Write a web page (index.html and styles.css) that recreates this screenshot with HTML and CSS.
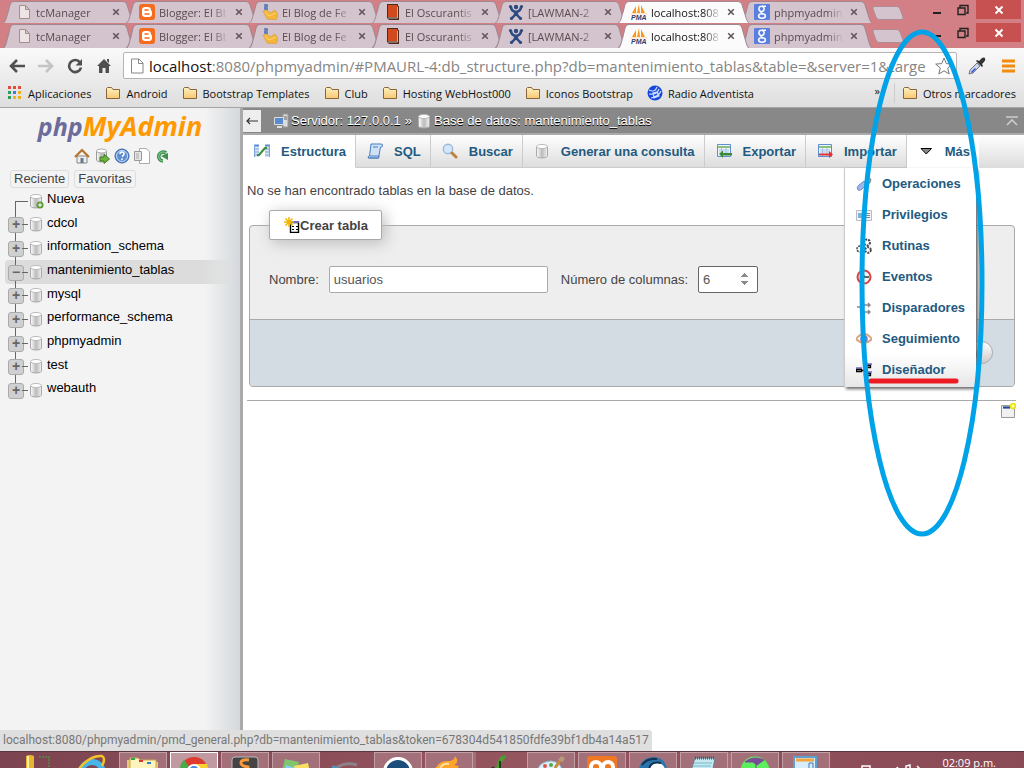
FILE: index.html
```html
<!DOCTYPE html>
<html lang="es">
<head>
  <meta charset="UTF-8">
  <title>localhost:8080 / phpMyAdmin</title>
  <link rel="stylesheet" href="styles.css">
</head>
<body>
  <!-- icons -->
  <svg class="sprite" width="0" height="0">
    <defs>
      <linearGradient id="gFolder" x1="0" y1="0" x2="0" y2="1"><stop offset="0" stop-color="#fff0c0"/><stop offset="1" stop-color="#f7c873"/></linearGradient>
      <linearGradient id="gDb"><stop offset="0" stop-color="#fff"/><stop offset="0.5" stop-color="#bbb"/><stop offset="1" stop-color="#f2f2f2"/></linearGradient>
    </defs>
    <symbol id="tab" viewBox="0 0 131 23" preserveAspectRatio="none">
      <path d="M0 23 C3 22 3 18 5 12 L7 4 Q8 .5 11 .5 H120 Q123 .5 124 4 L127 14 Q129 22 131 23" stroke="#a0868f"/>
    </symbol>
    <symbol id="page" viewBox="0 0 16 16"><path d="M3.500 1.500h6l4 4v9h-10z M9.500 1.500v4h4" fill="#eee4e4" stroke="#a09090"/></symbol>
    <symbol id="blogger" viewBox="0 0 16 16"><rect width="16" height="16" rx="3" fill="#f76b1c"/><path d="M6 3h3c2 0 3 1.500 3 3 0 1 1 .7 1 2v2c0 2-1 3-3 3H6c-2 0-3-1-3-3V6c0-2 1-3 3-3z" fill="#fff"/><path d="M6 6h3M6 10h4" stroke="#f76b1c" stroke-width="1.500" stroke-linecap="round"/></symbol>
    <symbol id="note" viewBox="0 0 16 16"><path d="M1 7l4-1 3 3 5-3 3 5-2 5-9-1z" fill="#f3b53a" stroke="#d9952a" stroke-width=".5"/><path d="M3 8l4 4 7-3" fill="none" stroke="#ffd76a"/><path d="M2 1h3v2H3v2h3" fill="none" stroke="#4a6fb5" stroke-width="1.500"/></symbol>
    <symbol id="book" viewBox="0 0 16 16"><path d="M2 0h11v2h1v14H4l-2-2z" fill="#4c2a1e"/><path d="M3 1h9v12H3z" fill="#d1491d"/><path d="M3 14h9.500V2.500" fill="none" stroke="#e8d6c8" stroke-width=".8"/></symbol>
    <symbol id="joomla" viewBox="0 0 16 16"><path d="M3 3q0 4 5 5 5-1 5-5M8 8q-1 4-4 6M8 8q1 4 4 6" fill="none" stroke="#2c4a80" stroke-width="2.600"/><g fill="#2c4a80"><circle cx="8" cy="3" r="2.200"/><circle cx="2.500" cy="2.500" r="1.600"/><circle cx="13.500" cy="2.500" r="1.600"/><circle cx="3.500" cy="14.400" r="1.600"/><circle cx="12.500" cy="14.400" r="1.600"/></g></symbol>
    <symbol id="pma" viewBox="0 0 16 16"><path d="M1 9L5 2v7zM6 9l2-9 1 9zM10 9V1l4 8z" fill="#f8981d"/><path d="M0 9.800h16" stroke="#ffcf8a" stroke-width=".7"/><text x="0" y="16" font-family="Liberation Sans, sans-serif" font-size="7" font-weight="bold" font-style="italic" fill="#333a6b">PMA</text></symbol>
    <symbol id="google" viewBox="0 0 16 16"><rect width="16" height="16" rx="1" fill="#5b7fe0"/><g fill="none" stroke="#fff" stroke-width="1.500"><circle cx="7.500" cy="4.800" r="2.600"/><path d="M8 2.200h4M9 7.300q-4 1.200 0 2.700"/><ellipse cx="8" cy="12" rx="3.400" ry="2.200"/></g></symbol>
    <symbol id="folder" viewBox="0 0 16 16"><path d="M1.500 13V3.500l1-1h4l1.500 2h6.500V13.500H1.500z" fill="url(#gFolder)" stroke="#8a6439"/></symbol>
    <symbol id="apps" viewBox="0 0 16 16"><path d="M1 1h3v3H1zM6 1h3v3H6zM11 1h3v3h-3z" fill="#e64a3c"/><path d="M1 6h3v3H1z" fill="#2a9d5c"/><path d="M6 6h3v3H6z" fill="#3b7de0"/><path d="M11 6h3v3h-3zM11 11h3v3h-3zM6 11h3v3H6z" fill="#f2b01e"/><path d="M1 11h3v3H1z" fill="#2a9d5c"/></symbol>
    <symbol id="radio" viewBox="0 0 16 16"><circle cx="8" cy="8" r="7.500" fill="#1846dd"/><path d="M2 5q6 3 8-3M2 9q8 1 10-5M4 13q8-2 10-7M6 8l4-1 2 4-5 2z" fill="none" stroke="#cfe0ff" stroke-width="1.200"/></symbol>
    <symbol id="db" viewBox="0 0 16 16"><path d="M2.500 4v9q0 2 5.500 2t5.500-2V4z" fill="url(#gDb)" stroke="#aaa"/><ellipse cx="8" cy="3.500" rx="5.500" ry="2" fill="#fff" stroke="#bbb"/></symbol>
    <symbol id="dbnew" viewBox="0 0 16 16"><path d="M2.500 4v9q0 2 5.500 2t5.500-2V4z" fill="url(#gDb)" stroke="#aaa"/><ellipse cx="8" cy="3.500" rx="5.500" ry="2" fill="#fff" stroke="#bbb"/><circle cx="12" cy="12" r="3.500" fill="#5a9a32"/><path d="M12 10v4M10 12h4" stroke="#fff"/></symbol>
    <symbol id="house" viewBox="0 0 16 16"><path d="M3 8h10v7H3z" fill="#eee" stroke="#888"/><path d="M1 9l7-7 7 7" fill="none" stroke="#b8742e" stroke-width="2.200"/><path d="M6.500 10h3v5h-3z" fill="#66788a"/></symbol>
    <symbol id="exit" viewBox="0 0 16 16"><path d="M2.500 3v9q0 2 5 2t5-2V3z" fill="url(#gDb)" stroke="#999"/><ellipse cx="7.500" cy="3" rx="5" ry="2" fill="#fff" stroke="#aaa"/><path d="M6 9h4V6l5.500 5-5.500 4.500V13H6z" fill="#6db33f" stroke="#3d7a1e"/></symbol>
    <symbol id="help" viewBox="0 0 16 16"><circle cx="8" cy="8" r="7" fill="#5d8fd0" stroke="#3d67a8"/><circle cx="8" cy="8" r="5.500" fill="none" stroke="#c8dcf5"/><path d="M6 6q0-2 2-2t2 2q0 1-2 2.500M8 10.500v1.500" fill="none" stroke="#fff" stroke-width="1.600"/></symbol>
    <symbol id="docs" viewBox="0 0 16 16"><path d="M5.500 .5H12l3.500 3v12h-10z" fill="#fff" stroke="#aaa"/><path d="M.5 3.500h7v9h-7z" fill="#e5e5e5" stroke="#999"/><path d="M2 6h3M2 8h3M2 10h3" stroke="#aaa"/></symbol>
    <symbol id="refresh" viewBox="0 0 16 16"><path d="M12 5A4.500 4.500 0 1 0 9 13" fill="none" stroke="#3e8e4e" stroke-width="3.600"/><path d="M12 5A4.500 4.500 0 1 0 9 13" fill="none" stroke="#7cc68a" stroke-width="1.200"/><path d="M7 8l7-3v7z" fill="#3e8e4e"/></symbol>
    <symbol id="server" viewBox="0 0 16 16"><path d="M10 1h5v13h-5z" fill="#ddd" stroke="#999"/><path d="M11 4h3M11 6h3" stroke="#666"/><path d="M1.500 4.500h9v7h-9z" fill="#5a8bd0" stroke="#ddd"/><path d="M4 14h5" stroke="#ddd" stroke-width="2"/></symbol>
    <symbol id="structure" viewBox="0 0 16 16"><path d="M0 2h5v12H0zM11 2h5v12h-5z" fill="#d9e6f7"/><path d="M0 2.500h5M11 2.500h5" stroke="#5a8bd0" stroke-width="2"/><path d="M0 6h5M0 9h5M0 12h5M11 6h5M11 9h5M11 12h5M.5 2v12M15.500 2v12" stroke="#7ba3d8"/><path d="M3 12h2l6-7h2" fill="none" stroke="#3e8e3e" stroke-width="2.200"/></symbol>
    <symbol id="sql" viewBox="0 0 16 16"><path d="M4 1h10q2 0 1.500 2-.5 1.500-2 1L11.500 15H1.500q-1.500-1.500 1-2z" fill="#cfe1f7" stroke="#4d7fbf"/><path d="M1.500 15h10l.5-2H3M6 4h5" fill="none" stroke="#4d7fbf"/></symbol>
    <symbol id="search" viewBox="0 0 16 16"><circle cx="6" cy="6" r="4.700" fill="#d3e7fb" stroke="#9cb8dd" stroke-width="1.400"/><path d="M10 10l4 4" stroke="#c0813c" stroke-width="3" stroke-linecap="round"/></symbol>
    <symbol id="export" viewBox="0 0 16 16"><path d="M1.500 1.500h13v12h-13z" fill="#eef4fc" stroke="#5f8fce"/><path d="M2 4h12" stroke="#8cc07c" stroke-width="2"/><path d="M3 7h10M3 9h10M5.500 5v8M10 5v8" stroke="#a8c3e6"/><path d="M3 11l4-3.500V10h9v2.500H7V15z" fill="#3a8a3a"/></symbol>
    <symbol id="import" viewBox="0 0 16 16"><path d="M1.500 1.500h13v12h-13z" fill="#eef4fc" stroke="#5f8fce"/><path d="M2 4h12" stroke="#8cc07c" stroke-width="2"/><path d="M3 7h10M3 9h10M5.500 5v8M10 5v8" stroke="#a8c3e6"/><path d="M16 11.500L12 8v2.500H2v2h10V15z" fill="#e03030"/></symbol>
    <symbol id="down" viewBox="0 0 16 16"><path d="M3 5.500h10.500L8.250 11z" fill="#888" stroke="#000"/></symbol>
    <symbol id="tools" viewBox="0 0 16 16"><path d="M2 14q-2-3 1-5l5-4 3 3-5 5q-2 2-4 1z" fill="#9db8e8" stroke="#6f8fc8"/><path d="M9 6l2-4 4 1-1 4-4 1z" fill="#bbb" stroke="#888"/></symbol>
    <symbol id="card" viewBox="0 0 16 16"><path d="M.5 3.500h15v10H.5z" fill="#f0f4f8" stroke="#bbb"/><path d="M2 6h5v5H2z" fill="#7fb2d8"/><path d="M9 6.500h5M9 8.500h5M9 10.500h5" stroke="#888"/></symbol>
    <symbol id="gears" viewBox="0 0 16 16"><g fill="none" stroke="#444"><circle cx="11" cy="4.500" r="3" stroke-dasharray="2 1" stroke-width="2"/><circle cx="4" cy="11" r="3" stroke-dasharray="2 1" stroke-width="1.500"/><circle cx="12" cy="12" r="2.800" stroke-dasharray="2 1" stroke-width="2"/></g></symbol>
    <symbol id="clock" viewBox="0 0 16 16"><circle cx="8" cy="8" r="6.500" fill="#f6f6f6" stroke="#d84040" stroke-width="2"/><path d="M7 4l1 4h5" fill="none" stroke="#333" stroke-width="1.500"/></symbol>
    <symbol id="trigger" viewBox="0 0 16 16"><path d="M1 7h4M12 3l2 2-2 2M14 5H9q-4 0-4 3t4 4h5M12 10l2 2-2 2" fill="none" stroke="#888" stroke-width="1.400"/></symbol>
    <symbol id="eye" viewBox="0 0 16 16"><path d="M0 8q8-10 16 0-8 8-16 0z" fill="#fff" stroke="#dba57e" stroke-width="2"/><circle cx="8" cy="8" r="3.800" fill="#5c86d6"/><circle cx="8" cy="8" r="1.500" fill="#223"/></symbol>
    <symbol id="designer" viewBox="0 0 16 16"><path d="M8 1h8v2H8zM8 9h8v2H8zM0 5h6v2H0z" fill="#8d8de0"/><path d="M8.500 3.500h6v2h-6zM8.500 11.500h6v2h-6zM.5 7.500h5v2h-5zM6 8.500h2.500" fill="#fff" stroke="#000" stroke-width="1.300"/></symbol>
    <symbol id="newtable" viewBox="0 0 16 16"><path d="M6.500 5.500h8v10h-8z" fill="#fff" stroke="#000" stroke-width="1.400"/><path d="M7 5h8" stroke="#6d6db0" stroke-width="2"/><path d="M8 9.500h2M8 12.500h2M12 9.500h2M12 12.500h2" stroke="#000"/><path d="M5 0v10M0 5h10M1.500 1.500l7 7M8.500 1.500l-7 7" stroke="#f3b400" stroke-width="1.500"/></symbol>
    <symbol id="newwin" viewBox="0 0 16 16"><path d="M1.500 2.500h13v12h-13z" fill="#f1f1f1" stroke="#999"/><path d="M3 4.500h7" stroke="#234a9a" stroke-width="2.200"/><circle cx="13" cy="3" r="2.500" fill="#ffffa0" stroke="#efe000" stroke-width="1.500"/></symbol>
    <symbol id="close" viewBox="0 0 10 10"><path d="M1.500 1.500l7 7M8.500 1.500l-7 7" stroke="currentColor" stroke-width="2"/></symbol>
    <symbol id="restore" viewBox="0 0 12 12"><path d="M1 4h7v6.500H1zM3 3.500V1.500h8V9H9" fill="none" stroke="currentColor" stroke-width="1.400"/></symbol>
    <symbol id="back" viewBox="0 0 16 16"><path d="M16 8H3M8 2L2 8l6 6" fill="none" stroke="currentColor" stroke-width="2.600"/></symbol>
  </svg>

  <div class="strip">
    <div class="tab"><svg class="shape"><use href="#tab"/></svg><svg class="icon"><use href="#page"/></svg><span class="title">tcManager</span><button class="tab-close" aria-label="Cerrar"><svg><use href="#close"/></svg></button></div>
    <div class="tab"><svg class="shape"><use href="#tab"/></svg><svg class="icon"><use href="#blogger"/></svg><span class="title">Blogger: El Bl</span><button class="tab-close" aria-label="Cerrar"><svg><use href="#close"/></svg></button></div>
    <div class="tab"><svg class="shape"><use href="#tab"/></svg><svg class="icon"><use href="#note"/></svg><span class="title">El Blog de Fe</span><button class="tab-close" aria-label="Cerrar"><svg><use href="#close"/></svg></button></div>
    <div class="tab"><svg class="shape"><use href="#tab"/></svg><svg class="icon"><use href="#book"/></svg><span class="title">El Oscurantis</span><button class="tab-close" aria-label="Cerrar"><svg><use href="#close"/></svg></button></div>
    <div class="tab"><svg class="shape"><use href="#tab"/></svg><svg class="icon"><use href="#joomla"/></svg><span class="title">[LAWMAN-2</span><button class="tab-close" aria-label="Cerrar"><svg><use href="#close"/></svg></button></div>
    <div class="tab active"><svg class="shape"><use href="#tab"/></svg><svg class="icon"><use href="#pma"/></svg><span class="title">localhost:808</span><button class="tab-close" aria-label="Cerrar"><svg><use href="#close"/></svg></button></div>
    <div class="tab"><svg class="shape"><use href="#tab"/></svg><svg class="icon"><use href="#google"/></svg><span class="title">phpmyadmin</span><button class="tab-close" aria-label="Cerrar"><svg><use href="#close"/></svg></button></div>
    <button class="new-tab" aria-label="Nueva pestaña"></button>
    <div class="win-controls">
      <button class="win-btn" aria-label="Minimizar"><svg viewBox="0 0 12 12"><path d="M2 9h8" stroke="currentColor" stroke-width="2"/></svg></button>
      <button class="win-btn" aria-label="Restaurar"><svg><use href="#restore"/></svg></button>
      <button class="win-close" aria-label="Cerrar"><svg><use href="#close"/></svg></button>
    </div>
  </div>
  <div class="strip front">
    <div class="tab"><svg class="shape"><use href="#tab"/></svg><svg class="icon"><use href="#page"/></svg><span class="title">tcManager</span><button class="tab-close" aria-label="Cerrar"><svg><use href="#close"/></svg></button></div>
    <div class="tab"><svg class="shape"><use href="#tab"/></svg><svg class="icon"><use href="#blogger"/></svg><span class="title">Blogger: El Bl</span><button class="tab-close" aria-label="Cerrar"><svg><use href="#close"/></svg></button></div>
    <div class="tab"><svg class="shape"><use href="#tab"/></svg><svg class="icon"><use href="#note"/></svg><span class="title">El Blog de Fe</span><button class="tab-close" aria-label="Cerrar"><svg><use href="#close"/></svg></button></div>
    <div class="tab"><svg class="shape"><use href="#tab"/></svg><svg class="icon"><use href="#book"/></svg><span class="title">El Oscurantis</span><button class="tab-close" aria-label="Cerrar"><svg><use href="#close"/></svg></button></div>
    <div class="tab"><svg class="shape"><use href="#tab"/></svg><svg class="icon"><use href="#joomla"/></svg><span class="title">[LAWMAN-2</span><button class="tab-close" aria-label="Cerrar"><svg><use href="#close"/></svg></button></div>
    <div class="tab active"><svg class="shape"><use href="#tab"/></svg><svg class="icon"><use href="#pma"/></svg><span class="title">localhost:808</span><button class="tab-close" aria-label="Cerrar"><svg><use href="#close"/></svg></button></div>
    <div class="tab"><svg class="shape"><use href="#tab"/></svg><svg class="icon"><use href="#google"/></svg><span class="title">phpmyadmin</span><button class="tab-close" aria-label="Cerrar"><svg><use href="#close"/></svg></button></div>
    <button class="new-tab" aria-label="Nueva pestaña"></button>
    <div class="win-controls">
      <button class="win-btn" aria-label="Minimizar"><svg viewBox="0 0 12 12"><path d="M2 9h8" stroke="currentColor" stroke-width="2"/></svg></button>
      <button class="win-btn" aria-label="Restaurar"><svg><use href="#restore"/></svg></button>
      <button class="win-close" aria-label="Cerrar"><svg><use href="#close"/></svg></button>
    </div>
  </div>

  <div class="toolbar">
    <button class="nav" aria-label="Atrás"><svg><use href="#back"/></svg></button>
    <button class="nav disabled" aria-label="Adelante"><svg class="flip"><use href="#back"/></svg></button>
    <button class="nav" aria-label="Recargar"><svg viewBox="0 0 16 16"><path d="M13 4.500A6 6 0 1 0 14 9.500" fill="none" stroke="currentColor" stroke-width="2.600"/><path d="M15 1v6.500H8.500z" fill="currentColor"/></svg></button>
    <button class="nav" aria-label="Inicio"><svg viewBox="0 0 16 16"><path d="M8 1l7 7H13v7H9.500v-5h-3v5H3V8H1zM11 1h2v4l-2-2z" fill="currentColor"/></svg></button>
    <div class="omnibox">
      <svg class="icon" viewBox="0 0 16 16"><path d="M2.500 1h7.500l4 4v10h-11.500zM9.500 1v4.500h4.500" fill="#fff" stroke="#888"/></svg>
      <a class="url" href="#"><b>localhost</b>:8080/phpmyadmin/#PMAURL-4:db_structure.php?db=mantenimiento_tablas&amp;table=&amp;server=1&amp;targe</a>
      <svg class="star" viewBox="0 0 18 18"><path d="M9 1l2.300 5.600 6 .5-4.600 3.900 1.500 6L9 13.800 3.800 17l1.500-6L.7 7.100l6-.5z" fill="#fff" stroke="#777"/></svg>
    </div>
    <button class="ext" aria-label="Cuentagotas"><svg viewBox="0 0 18 18"><path d="M1 17l1-4 7-7 3 3-7 7z" fill="#c9d4ee" stroke="#777"/><path d="M3 15l4-4 1 1-4 4z" fill="#2c50d8"/><path d="M8 4l1-1 2 1 3-3q2-1 3 0 1 2-1 4l-2 2 1 2-1 1z" fill="#333"/></svg></button>
    <button class="ext" aria-label="Menú"><svg viewBox="0 0 18 18"><path d="M3 4h13M3 9h13M3 14h13" stroke="#f28c0f" stroke-width="3"/></svg></button>
  </div>

  <nav class="bookmarks">
    <a href="#"><svg class="icon"><use href="#apps"/></svg>Aplicaciones</a>
    <a href="#"><svg class="icon"><use href="#folder"/></svg>Android</a>
    <a href="#"><svg class="icon"><use href="#folder"/></svg>Bootstrap Templates</a>
    <a href="#"><svg class="icon"><use href="#folder"/></svg>Club</a>
    <a href="#"><svg class="icon"><use href="#folder"/></svg>Hosting WebHost000</a>
    <a href="#"><svg class="icon"><use href="#folder"/></svg>Iconos Bootstrap</a>
    <a href="#"><svg class="icon"><use href="#radio"/></svg>Radio Adventista</a>
    <span class="more-marks">»</span>
    <a class="others" href="#"><svg class="icon"><use href="#folder"/></svg>Otros marcadores</a>
  </nav>

  <div class="page">
    <aside class="sidebar">
      <h1 class="logo"><span>php</span>MyAdmin</h1>
      <div class="side-icons">
        <a href="#" aria-label="Inicio"><svg class="icon"><use href="#house"/></svg></a>
        <a href="#" aria-label="Salir"><svg class="icon"><use href="#exit"/></svg></a>
        <a href="#" aria-label="Ayuda"><svg class="icon"><use href="#help"/></svg></a>
        <a href="#" aria-label="Documentación"><svg class="icon"><use href="#docs"/></svg></a>
        <a href="#" aria-label="Recargar"><svg class="icon"><use href="#refresh"/></svg></a>
      </div>
      <div class="side-buttons">
        <button>Reciente</button>
        <button>Favoritas</button>
      </div>
      <ul class="tree">
        <li class="new"><i class="branch"></i><svg class="icon"><use href="#dbnew"/></svg><a href="#">Nueva</a></li>
        <li><i class="branch box"></i><svg class="icon"><use href="#db"/></svg><a href="#">cdcol</a></li>
        <li><i class="branch box"></i><svg class="icon"><use href="#db"/></svg><a href="#">information_schema</a></li>
        <li class="selected"><i class="branch box open"></i><svg class="icon"><use href="#db"/></svg><a href="#">mantenimiento_tablas</a></li>
        <li><i class="branch box"></i><svg class="icon"><use href="#db"/></svg><a href="#">mysql</a></li>
        <li><i class="branch box"></i><svg class="icon"><use href="#db"/></svg><a href="#">performance_schema</a></li>
        <li><i class="branch box"></i><svg class="icon"><use href="#db"/></svg><a href="#">phpmyadmin</a></li>
        <li><i class="branch box"></i><svg class="icon"><use href="#db"/></svg><a href="#">test</a></li>
        <li><i class="branch box"></i><svg class="icon"><use href="#db"/></svg><a href="#">webauth</a></li>
      </ul>
    </aside>

    <main class="content">
      <div class="crumbs">
        <button class="collapse" aria-label="Ocultar panel"><svg viewBox="0 0 14 10"><path d="M13 5H2M5 2L2 5l3 3" fill="none" stroke="#333" stroke-width="1.200"/></svg></button>
        <a href="#"><svg class="icon"><use href="#server"/></svg>Servidor: 127.0.0.1</a>
        <span>»</span>
        <a href="#"><svg class="icon"><use href="#db"/></svg>Base de datos: mantenimiento_tablas</a>
        <svg class="to-top" viewBox="0 0 12 12"><path d="M0 2h12M1 10l5-5 5 5" fill="none" stroke="#ccc" stroke-width="1.600"/></svg>
      </div>
      <ul class="menu">
        <li class="active"><a href="#"><svg class="icon"><use href="#structure"/></svg>Estructura</a></li>
        <li><a href="#"><svg class="icon"><use href="#sql"/></svg>SQL</a></li>
        <li><a href="#"><svg class="icon"><use href="#search"/></svg>Buscar</a></li>
        <li><a href="#"><svg class="icon"><use href="#db"/></svg>Generar una consulta</a></li>
        <li><a href="#"><svg class="icon"><use href="#export"/></svg>Exportar</a></li>
        <li><a href="#"><svg class="icon"><use href="#import"/></svg>Importar</a></li>
        <li class="more"><a href="#"><svg class="icon"><use href="#down"/></svg>Más</a>
          <ul class="submenu">
            <li><a href="#"><svg class="icon"><use href="#tools"/></svg>Operaciones</a></li>
            <li><a href="#"><svg class="icon"><use href="#card"/></svg>Privilegios</a></li>
            <li><a href="#"><svg class="icon"><use href="#gears"/></svg>Rutinas</a></li>
            <li><a href="#"><svg class="icon"><use href="#clock"/></svg>Eventos</a></li>
            <li><a href="#"><svg class="icon"><use href="#trigger"/></svg>Disparadores</a></li>
            <li><a href="#"><svg class="icon"><use href="#eye"/></svg>Seguimiento</a></li>
            <li><a href="#"><svg class="icon"><use href="#designer"/></svg>Diseñador</a></li>
          </ul>
        </li>
      </ul>

      <p class="message">No se han encontrado tablas en la base de datos.</p>
      <form class="create">
        <fieldset>
          <legend><svg class="icon"><use href="#newtable"/></svg>Crear tabla</legend>
          <div class="fields">
            <label for="table">Nombre:</label>
            <input type="text" id="table" value="usuarios">
            <label for="columns">Número de columnas:</label>
            <input type="number" id="columns" value="6">
          </div>
          <div class="footer"><button type="button">Continuar</button></div>
        </fieldset>
      </form>
      <div class="page-end"><svg class="icon"><use href="#newwin"/></svg></div>
    </main>
    <div class="status">localhost:8080/phpmyadmin/pmd_general.php?db=mantenimiento_tablas&amp;token=678304d541850fdfe39bf1db4a14a517</div>
  </div>

  <footer class="taskbar">
    <button class="app" aria-label="Recortes"><svg viewBox="0 0 48 17"><path d="M9 4q4-2 8 0v13H9z" fill="#e8b530"/><path d="M11 4v13" stroke="#fff0a0" stroke-width="2"/><path d="M22 5h10v12" fill="none" stroke="#3fae49" stroke-dasharray="2 1"/></svg></button>
    <button class="app" aria-label="Internet Explorer"><svg viewBox="0 0 48 17"><circle cx="24" cy="21" r="11" fill="none" stroke="#45b6ea" stroke-width="6"/><path d="M11 17Q22 3 34 4q4 2 0 10" fill="none" stroke="#f3c22b" stroke-width="2.500"/></svg></button>
    <button class="app open" aria-label="Explorador"><svg viewBox="0 0 48 17"><path d="M8 8h9l2 2h20v8H8z" fill="#e8c972"/><path d="M11 6h8l2 2h16v9H11z" fill="#fff3bd" stroke="#cda84e"/><path d="M12 7h4" stroke="#2ba84a" stroke-width="2"/><path d="M20 9h4" stroke="#d33" stroke-width="2"/><path d="M28 11h4" stroke="#2d7fd0" stroke-width="2"/></svg></button>
    <button class="app open current" aria-label="Chrome"><svg viewBox="0 0 48 17"><circle cx="24" cy="19" r="14" fill="#df3a2f"/><path d="M10 17q0-6 4-9l7 9zM24 14h14v5H24z" fill="#4aab4e"/><path d="M25 12h12l2 7H25z" fill="#f8d02f"/><circle cx="24" cy="19" r="6" fill="#4a86dd" stroke="#fff" stroke-width="2"/></svg></button>
    <button class="app open" aria-label="Sublime Text"><svg viewBox="0 0 48 17"><rect x="11" y="5" width="26" height="20" rx="3" fill="#444" stroke="#bbb"/><path d="M28 8q-8-1-8 3 0 3 7 4v4" fill="none" stroke="#f5983b" stroke-width="3"/></svg></button>
    <button class="app open" aria-label="Notas"><svg viewBox="0 0 48 17"><path d="M13 7l14 3-3 12-14-3z" fill="#7fc56b"/><path d="M22 14l14-3 2 9H22z" fill="#f6df62"/><path d="M14 13l10 3-2 6H12z" fill="#8acdee"/></svg></button>
    <button class="app" aria-label="MySQL"><svg viewBox="0 0 48 17"><path d="M9 15q5 0 7 2M12 17q9-8 22-4" fill="none" stroke="#8d8088" stroke-width="3"/><path d="M9 15q3 1 5 0" stroke="#4795c5" stroke-width="2"/></svg></button>
    <button class="app open" aria-label="Aptana"><svg viewBox="0 0 48 17"><circle cx="24" cy="20" r="13.500" fill="#1d4d7a" stroke="#fff" stroke-width="3"/></svg></button>
    <button class="app open stacked" aria-label="Winamp"><svg viewBox="0 0 48 17"><path d="M10 17Q14 8 25 9q5-1 5-5 5 6-1 9l5 1-4 6H9z" fill="#ffa52d"/><path d="M15 17q2-6 9-5" fill="none" stroke="#ffe09a" stroke-width="2"/></svg></button>
    <button class="app" aria-label="Planta"><svg viewBox="0 0 48 17"><path d="M20 17q1-8 4-11 1-3 6-3-1 6-6 8v6z" fill="#4b9b31"/><path d="M24 9v8M18 15l-3 2" stroke="#253b20" stroke-width="2"/></svg></button>
    <button class="app open" aria-label="Paint"><svg viewBox="0 0 48 17"><path d="M11 17q2-7 13-8 10 1 11 10H11z" fill="#dceffa" stroke="#93bfd8"/><path d="M28 16l6-9" stroke="#c98a3d" stroke-width="3"/><path d="M31 8l3-4 4 2-2 4z" fill="#b39a78"/><circle cx="18" cy="14" r="2" fill="#dc5548"/><circle cx="24" cy="13" r="2" fill="#55a94d"/></svg></button>
    <button class="app open" aria-label="XAMPP"><svg viewBox="0 0 48 17"><rect x="9" y="4" width="30" height="25" rx="3" fill="#ef7922"/><g fill="none" stroke="#fff" stroke-width="4"><circle cx="18" cy="15" r="5"/><circle cx="30" cy="15" r="5"/></g></svg></button>
    <button class="app open" aria-label="Pájaro"><svg viewBox="0 0 48 17"><path d="M10 17Q12 6 24 5q12 0 14 12z" fill="#2874ad"/><path d="M20 17q2-6 8-6t8 6z" fill="#fff"/><path d="M13 13q5-7 15-6M20 17q2-8 12-6" fill="none" stroke="#15324e" stroke-width="2"/></svg></button>
    <button class="app open stacked" aria-label="Bloc de notas"><svg viewBox="0 0 48 17"><path d="M15 6h20l-3 16H10z" fill="#c9e9f2" stroke="#67828d"/><path d="M15 6h20" stroke="#555" stroke-width="3" stroke-dasharray="1 1"/><path d="M14 11h18M13 14h18" stroke="#75b8ca"/></svg></button>
    <button class="app open" aria-label="Globo"><svg viewBox="0 0 48 17"><circle cx="24" cy="19" r="14.500" fill="#5df05d"/><path d="M14 10q8-7 19-2l-7 5-4-3zM25 9v8" fill="#7b4b98" stroke="#7b4b98"/></svg></button>
    <button class="app open" aria-label="Ventana"><svg viewBox="0 0 48 17"><rect x="12" y="5" width="22" height="20" fill="#d8ecfa" stroke="#5f9fd0" stroke-width="2"/><path d="M14 8h18" stroke="#f3a43b" stroke-width="3"/><path d="M27 11h4v6h-4z" fill="none" stroke="#3a7ac0"/></svg></button>
    <div class="tray">
      <svg viewBox="0 0 64 17"><path d="M2 17v-3h8v3M36 17l2-2M46 17v-3l4-1v4M57 14l3 3" fill="none" stroke="#fff" stroke-width="1.500"/></svg>
      <time>02:09 p.m.</time>
    </div>
  </footer>

  <!-- pen marks -->
  <svg class="marks" viewBox="0 0 1024 768">
    <ellipse cx="922" cy="283" rx="60" ry="251" fill="none" stroke="#00a2e8" stroke-width="5"/>
    <path d="M871 381L956 381" stroke="#ed1c24" stroke-width="5" stroke-linecap="round"/>
  </svg>
</body>
</html>
```

FILE: styles.css
```css
* {
  padding: 0;
  margin: 0;
  box-sizing: border-box;
}

body {
  height: 100vh;
  display: flex;
  flex-direction: column;
  overflow: hidden;
  position: relative;
  font-family: "Liberation Sans", Arial, sans-serif;
  font-size: 13px;
  color: #444;
  background-color: #fff;
}

a {
  color: inherit;
  text-decoration: none;
}

ul {
  list-style: none;
}

button {
  border: 0;
  background: none;
  font: inherit;
  color: inherit;
}

svg {
  display: block;
  flex: none;
}

.sprite {
  position: absolute;
}

.icon {
  width: 16px;
  height: 16px;
}

/* tabs */
.strip {
  display: flex;
  flex: none;
  height: 23px;
  padding: 1px 3px 0;
  background-color: #d37f86;
  font-family: "Open Sans", "Noto Sans", sans-serif;
  font-size: 11px;
}

.strip.front {
  height: 25px;
}

.tab {
  position: relative;
  display: flex;
  align-items: center;
  flex: 0 1 131px;
  min-width: 0;
  height: 100%;
  margin-right: -8px;
  padding: 0 14px 0 13px;
  color: #5c4a50;
}

.shape {
  position: absolute;
  left: 0;
  top: 0;
  width: 100%;
  height: 100%;
  fill: #d3c4cd;
}

.tab .icon,
.title,
.tab-close {
  position: relative;
}

.tab.active {
  z-index: 2;
  color: #111;
}

.tab.active .shape {
  fill: #fbfbfb;
}

.title {
  flex: 1;
  margin-left: 4px;
  overflow: hidden;
  white-space: nowrap;
  -webkit-mask-image: linear-gradient(to right, #000 75%, transparent);
  mask-image: linear-gradient(to right, #000 75%, transparent);
}

.tab-close {
  margin-left: 6px;
  color: #65555b;
}

.tab-close svg {
  width: 8px;
  height: 8px;
}

.new-tab {
  width: 28px;
  height: 14px;
  margin: 5px 0 0 10px;
  background-color: #d3c4cd;
  border: 1px solid #b08c94;
  border-radius: 3px;
  transform: skewX(20deg);
}

.win-controls {
  display: flex;
  margin: -1px 0 0 auto;
  color: #222;
}

.win-btn {
  width: 26px;
  height: 19px;
}

.win-btn svg {
  width: 12px;
  height: 12px;
  margin: 0 auto;
}

.win-close {
  width: 45px;
  height: 19px;
  background-color: #c75050;
  color: #fff;
}

.win-close svg {
  width: 10px;
  height: 10px;
  margin: 0 auto;
}

/* toolbar */
.toolbar {
  display: flex;
  align-items: center;
  flex: none;
  gap: 13px;
  height: 35px;
  padding: 0 7px 0 9px;
  background: linear-gradient(#fafafa, #e9e9e9);
}

.nav {
  width: 16px;
  color: #505050;
}

.nav svg {
  width: 16px;
  height: 16px;
}

.nav.disabled {
  color: #c4c4c4;
}

.flip {
  transform: scaleX(-1);
}

.omnibox {
  display: flex;
  align-items: center;
  flex: 1;
  min-width: 0;
  height: 27px;
  margin: 0 -2px;
  padding: 0 3px 0 5px;
  background-color: #fff;
  border: 1px solid #b4b4b4;
  border-radius: 2px;
}

.url {
  flex: 1;
  margin-left: 4px;
  overflow: hidden;
  white-space: nowrap;
  font-family: "Open Sans", "Noto Sans", sans-serif;
  font-size: 15px;
  color: #858585;
}

.url b {
  font-weight: normal;
  color: #111;
}

.star {
  width: 18px;
  height: 18px;
}

.ext svg {
  width: 18px;
  height: 18px;
}

/* bookmarks */
.bookmarks {
  display: flex;
  flex: none;
  gap: 14px;
  height: 25px;
  padding: 0 8px 4px 7px;
  background: linear-gradient(#e9e9e9, #dedede);
  border-bottom: 1px solid #a5a5a5;
  font-family: "Open Sans", "Noto Sans", sans-serif;
  font-size: 11px;
  color: #111;
  white-space: nowrap;
}

.bookmarks a {
  display: flex;
  align-items: center;
  gap: 5px;
}

.more-marks {
  margin-left: auto;
}

.bookmarks .others {
  padding-left: 7px;
  border-left: 1px solid #ccc;
}

/* page */
.page {
  display: flex;
  flex: 1;
  min-height: 0;
  position: relative;
}

.sidebar {
  flex: none;
  width: 243px;
  background: linear-gradient(to right, #f3f3f3 205px, #d4d8dc 240px);
  border-right: 3px solid #aaa;
}

.logo {
  height: 40px;
  font-family: "Open Sans", "Noto Sans", sans-serif;
  font-size: 27px;
  font-style: italic;
  line-height: 36px;
  text-align: center;
  color: #f90;
}

.logo span {
  color: #6c6c9c;
  font-size: 25px;
}

.side-icons {
  display: flex;
  gap: 4px;
  padding-left: 74px;
}

.side-buttons {
  display: flex;
  gap: 5px;
  padding: 6px 0 0 10px;
}

.side-buttons button {
  height: 18px;
  padding: 0 3px;
  border: 1px solid #ddd;
  border-radius: 3px;
  line-height: 16px;
}

.tree {
  display: grid;
  grid-auto-rows: 1fr;
  height: 213px;
  margin: 1px 0 0 5px;
  color: #000;
}

.tree li {
  position: relative;
  display: flex;
  align-items: center;
  padding-left: 3px;
}

/* vertical line that joins the nodes */
.tree li::before {
  content: "";
  position: absolute;
  left: 10px;
  top: 0;
  bottom: 0;
  border-left: 1px solid #666;
}

.tree li.new::before {
  top: 50%;
}

.tree li:last-child::before {
  bottom: 50%;
}

.tree .selected {
  background: linear-gradient(to right, #dcdcdc 200px, transparent);
  border-radius: 4px 0 0 4px;
}

.branch {
  position: relative;
  width: 20px;
  height: 14px;
}

.branch::after {
  content: "";
  position: absolute;
  left: 7px;
  right: 0;
  top: 7px;
  border-top: 1px solid #666;
}

.branch.box::after {
  left: 14px;
}

.branch.box::before {
  content: "+";
  position: absolute;
  width: 14px;
  height: 14px;
  background-color: #d0d0d0;
  border: 1px solid #aaa;
  border-radius: 3px;
  font: bold 14px/12px "Liberation Sans", Arial, sans-serif;
  text-align: center;
  color: #666;
}

.branch.open::before {
  content: "−";
}

.tree a {
  align-self: flex-start;
  margin-left: 3px;
  line-height: 20px;
}

/* content */
.content {
  flex: 1;
  min-width: 0;
}

.crumbs {
  display: flex;
  align-items: center;
  gap: 4px;
  height: 27px;
  padding-right: 6px;
  background-color: #888;
  border-bottom: 2px solid #aaa;
  color: #fff;
  text-shadow: 0 1px 0 #000;
}

.crumbs a {
  display: flex;
  align-items: center;
  gap: 2px;
}

.collapse {
  width: 18px;
  height: 22px;
  margin-right: 8px;
  background-color: #eee;
}

.collapse svg {
  width: 14px;
  height: 10px;
  margin: 0 auto;
}

.to-top {
  width: 12px;
  height: 12px;
  margin-left: auto;
}

.menu {
  display: flex;
  height: 33px;
  background: linear-gradient(#fff, #dcdcdc);
  font-weight: bold;
  color: #235a81;
}

.menu > li {
  border-right: 1px solid #ccc;
  border-bottom: 1px solid #ccc;
}

.menu > li.active {
  background-color: #fff;
  border-bottom-color: #fff;
}

.menu a {
  display: flex;
  align-items: center;
  gap: 11px;
  height: 32px;
  padding: 0 9px 0 11px;
  white-space: nowrap;
}

.menu > .more {
  position: relative;
  background-color: #fff;
  border: 0;
}

.submenu {
  position: absolute;
  z-index: 5;
  right: 3px;
  top: 33px;
  width: 132px;
  padding-bottom: 2px;
  background: linear-gradient(#fff 85%, #e6e6e6);
  border-left: 1px solid #ccc;
  box-shadow: 2px 2px 3px #666;
}

.submenu li a {
  gap: 10px;
  height: 31px;
}

.message {
  padding: 15px 4px;
  line-height: 15px;
}

.create {
  padding: 0 9px 0 6px;
}

.create fieldset {
  margin-top: -3px;
  background-color: #eee;
  border: 1px solid #aaa;
  border-radius: 4px;
}

.create legend {
  display: flex;
  align-items: center;
  height: 30px;
  margin-left: 19px;
  padding: 0 13px 0 14px;
  background-color: #fff;
  border: 1px solid #aaa;
  border-radius: 2px;
  box-shadow: 3px 3px 15px #bbb;
  font-weight: bold;
}

.fields {
  display: flex;
  align-items: center;
  gap: 10px;
  padding: 26px 19px;
}

.fields input {
  height: 27px;
  padding: 0 4px;
  background-color: #fff;
  border: 1px solid #aaa;
  border-radius: 2px;
  font: inherit;
  color: #555;
}

.fields input[type="text"] {
  width: 219px;
  margin-right: 3px;
}

.fields input[type="number"] {
  width: 60px;
  border-color: #666;
}

.fields input::-webkit-inner-spin-button {
  opacity: 1;
  margin-right: 1px;
}

.footer {
  display: flex;
  justify-content: flex-end;
  height: 67px;
  padding: 21px;
  background-color: #d3dce3;
  border-top: 1px solid #aaa;
  border-radius: 0 0 4px 4px;
}

.footer button {
  height: 23px;
  padding: 0 10px;
  background: linear-gradient(#fff, #ccc);
  border: 1px solid #aaa;
  border-radius: 12px;
}

.page-end {
  display: flex;
  justify-content: flex-end;
  margin: 13px 8px 0 4px;
  padding-top: 2px;
  border-top: 1px solid #aaa;
}

.status {
  position: absolute;
  left: 0;
  bottom: 0;
  height: 21px;
  padding: 0 3px;
  background-color: #dfdfdf;
  border-radius: 0 3px 0 0;
  font-family: Roboto, "Open Sans", sans-serif;
  font-size: 12px;
  line-height: 21px;
  color: #777;
}

/* taskbar */
.taskbar {
  display: flex;
  flex: none;
  gap: 3px;
  height: 17px;
  padding-left: 17px;
  overflow: hidden;
  background: linear-gradient(to right, #7c4450, #95555f 50%, #8a4a56);
  border-top: 1px solid #5b3540;
}

.app {
  width: 48px;
  height: 48px;
}

.app svg {
  width: 48px;
  height: 17px;
  margin: -1px 0 30px;
}

.app.open {
  background-color: #a37079;
  box-shadow: inset 0 0 0 1px #c2a0a6;
}

.app.current {
  background-color: #c09aa0;
  box-shadow: inset 0 0 0 1px #fff;
}

.app.stacked {
  box-shadow: inset 0 0 0 1px #c2a0a6, 3px 0 0 #a37079;
}

.tray {
  display: flex;
  gap: 18px;
  margin-left: auto;
  padding-right: 28px;
  font-family: "Open Sans", "Noto Sans", sans-serif;
  font-size: 11px;
  line-height: 22px;
  color: #fff;
}

.tray svg {
  width: 64px;
  height: 17px;
}

/* pen marks over the whole window */
.marks {
  position: absolute;
  z-index: 10;
  left: 0;
  top: 0;
  width: 100%;
  height: 100%;
  pointer-events: none;
}
```
